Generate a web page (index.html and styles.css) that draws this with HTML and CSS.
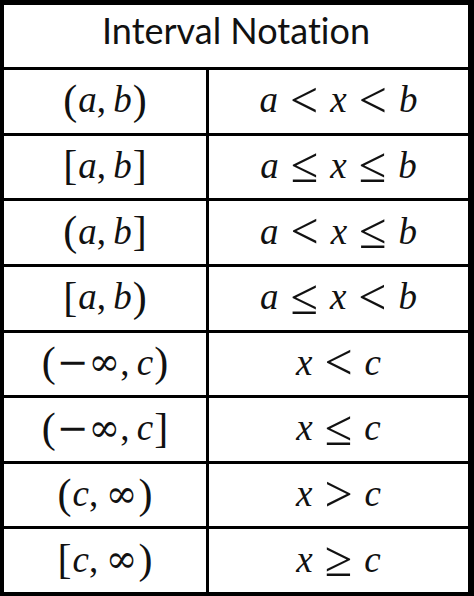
FILE: index.html
```html
<!DOCTYPE html>
<html>
<head>
<meta charset="utf-8">
<link rel="stylesheet" href="styles.css">
</head>
<body>
<div class="table">
  <div class="head">Interval Notation</div>
  <div class="row"><div class="c l"><span class="p">(</span><i>a</i>,&#8201;<i>b</i><span class="p">)</span></div><div class="c r"><i>a</i><span class="op">&lt;</span><i>x</i><span class="op">&lt;</span><i>b</i></div></div>
  <div class="row"><div class="c l"><span class="p">[</span><i>a</i>,&#8201;<i>b</i><span class="p">]</span></div><div class="c r"><i>a</i><span class="op">≤</span><i>x</i><span class="op">≤</span><i>b</i></div></div>
  <div class="row"><div class="c l"><span class="p">(</span><i>a</i>,&#8201;<i>b</i><span class="p">]</span></div><div class="c r"><i>a</i><span class="op">&lt;</span><i>x</i><span class="op">≤</span><i>b</i></div></div>
  <div class="row"><div class="c l"><span class="p">[</span><i>a</i>,&#8201;<i>b</i><span class="p">)</span></div><div class="c r"><i>a</i><span class="op">≤</span><i>x</i><span class="op">&lt;</span><i>b</i></div></div>
  <div class="row"><div class="c l"><span class="p">(</span><span class="u">−∞</span>,&#8201;<i>c</i><span class="p">)</span></div><div class="c r"><i>x</i><span class="op">&lt;</span><i>c</i></div></div>
  <div class="row"><div class="c l"><span class="p">(</span><span class="u">−∞</span>,&#8201;<i>c</i><span class="p">]</span></div><div class="c r"><i>x</i><span class="op">≤</span><i>c</i></div></div>
  <div class="row"><div class="c l"><span class="p">(</span><i>c</i>,&#8201;<span class="u">∞</span><span class="p">)</span></div><div class="c r"><i>x</i><span class="op">&gt;</span><i>c</i></div></div>
  <div class="row"><div class="c l"><span class="p">[</span><i>c</i>,&#8201;<span class="u">∞</span><span class="p">)</span></div><div class="c r"><i>x</i><span class="op">≥</span><i>c</i></div></div>
</div>
</body>
</html>
```
FILE: styles.css
```css
html, body {
  margin: 0;
  padding: 0;
  background: #fff;
}
.table {
  width: 474px;
  height: 596px;
  box-sizing: border-box;
  border-style: solid;
  border-color: #000;
  border-width: 5px 6px 4px 4px;
  display: flex;
  flex-direction: column;
  color: #111;
}
.head {
  height: 62px;
  flex: none;
  display: flex;
  align-items: center;
  justify-content: center;
  font-family: Lato, "Open Sans", sans-serif;
  font-size: 36px;
  font-variant-ligatures: none;
  padding-bottom: 12px;
  box-sizing: border-box;
}
.row {
  flex: 1;
  display: flex;
  border-top: 3px solid #000;
}
.c {
  display: flex;
  align-items: center;
  justify-content: center;
  font-family: "Liberation Serif", serif;
  font-size: 37px;
  white-space: pre;
  padding-bottom: 3px;
  box-sizing: border-box;
}
.l {
  width: 205px;
  flex: none;
  border-right: 3px solid #000;
}
.r {
  flex: 1;
}
.c i {
  font-style: italic;
}
.p {
  font-size: 42px;
  margin: 0 1px;
}
.op {
  font-family: "Liberation Serif", serif;
  font-size: 50px;
  margin: 0 12px;
}
.u {
  font-family: "DejaVu Serif", serif;
  font-size: 38px;
}
```
